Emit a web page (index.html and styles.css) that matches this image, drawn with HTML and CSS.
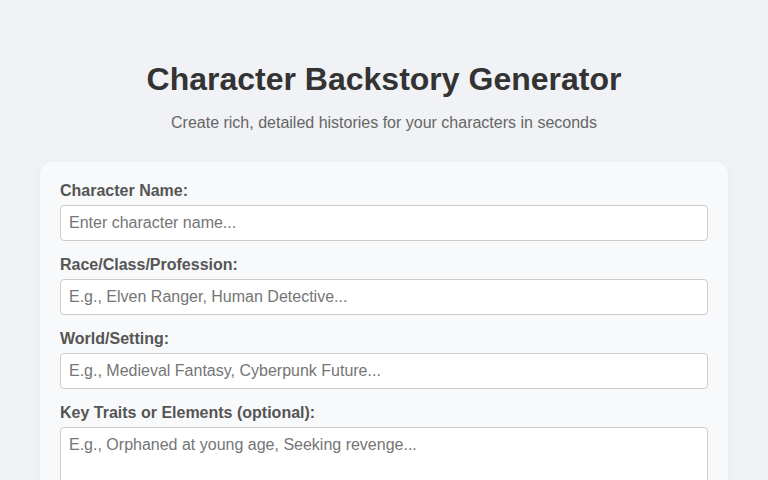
FILE: index.html
```html
<!DOCTYPE html>
<html lang="en">
<head>
  <meta charset="UTF-8">
  <meta name="viewport" content="width=device-width, initial-scale=1.0">
  <title>Character Backstory Generator</title>
  <link rel="stylesheet" href="styles.css">
</head>
<body>
  <div class="container">
    <header class="header">
      <h1>Character Backstory Generator</h1>
      <p class="subtitle">Create rich, detailed histories for your characters in seconds</p>
    </header>

    <div class="card">
      <div class="form-group">
        <label for="charName">Character Name:</label>
        <input type="text" id="charName" placeholder="Enter character name...">
      </div>
      <div class="form-group">
        <label for="charRace">Race/Class/Profession:</label>
        <input type="text" id="charRace" placeholder="E.g., Elven Ranger, Human Detective...">
      </div>
      <div class="form-group">
        <label for="charWorld">World/Setting:</label>
        <input type="text" id="charWorld" placeholder="E.g., Medieval Fantasy, Cyberpunk Future...">
      </div>
      <div class="form-group">
        <label for="charTraits">Key Traits or Elements (optional):</label>
        <textarea id="charTraits" placeholder="E.g., Orphaned at young age, Seeking revenge..."></textarea>
      </div>
      <button id="generateBtn">Generate Backstory</button>
    </div>
  </div>
</body>
</html>
```

FILE: styles.css
```css
body {
  font-family: "Liberation Sans", Arial, sans-serif;
  line-height: normal;
  margin: 0;
  padding: 40px;
  background-color: #f0f2f5;
  color: #333;
}
.container {
  max-width: 800px;
  margin: 0 auto;
}
.header {
  text-align: center;
  margin-bottom: 30px;
}
h1 {
  color: #333;
  font-size: 32px;
  margin: 21px 0 16px;
}
.subtitle {
  color: #666;
  font-size: 16px;
  margin: 0;
}
.card {
  background-color: #f8f9fa;
  border-radius: 12px;
  box-shadow: 0 2px 10px rgba(0, 0, 0, 0.05);
  padding: 20px;
}
.form-group {
  margin-bottom: 15px;
}
label {
  display: block;
  font-weight: bold;
  font-size: 16px;
  color: #555;
  margin-bottom: 5px;
}
input, textarea {
  display: block;
  width: 100%;
  box-sizing: border-box;
  padding: 8px;
  font-family: inherit;
  font-size: 16px;
  border: 1px solid #ccc;
  border-radius: 4px;
  background-color: #fff;
  color: #333;
}
textarea {
  height: 100px;
  resize: vertical;
}
::placeholder {
  color: #757575;
}
button {
  background-color: #4a6fa5;
  color: white;
  border: none;
  padding: 12px 20px;
  border-radius: 4px;
  font-size: 16px;
  cursor: pointer;
}
```
